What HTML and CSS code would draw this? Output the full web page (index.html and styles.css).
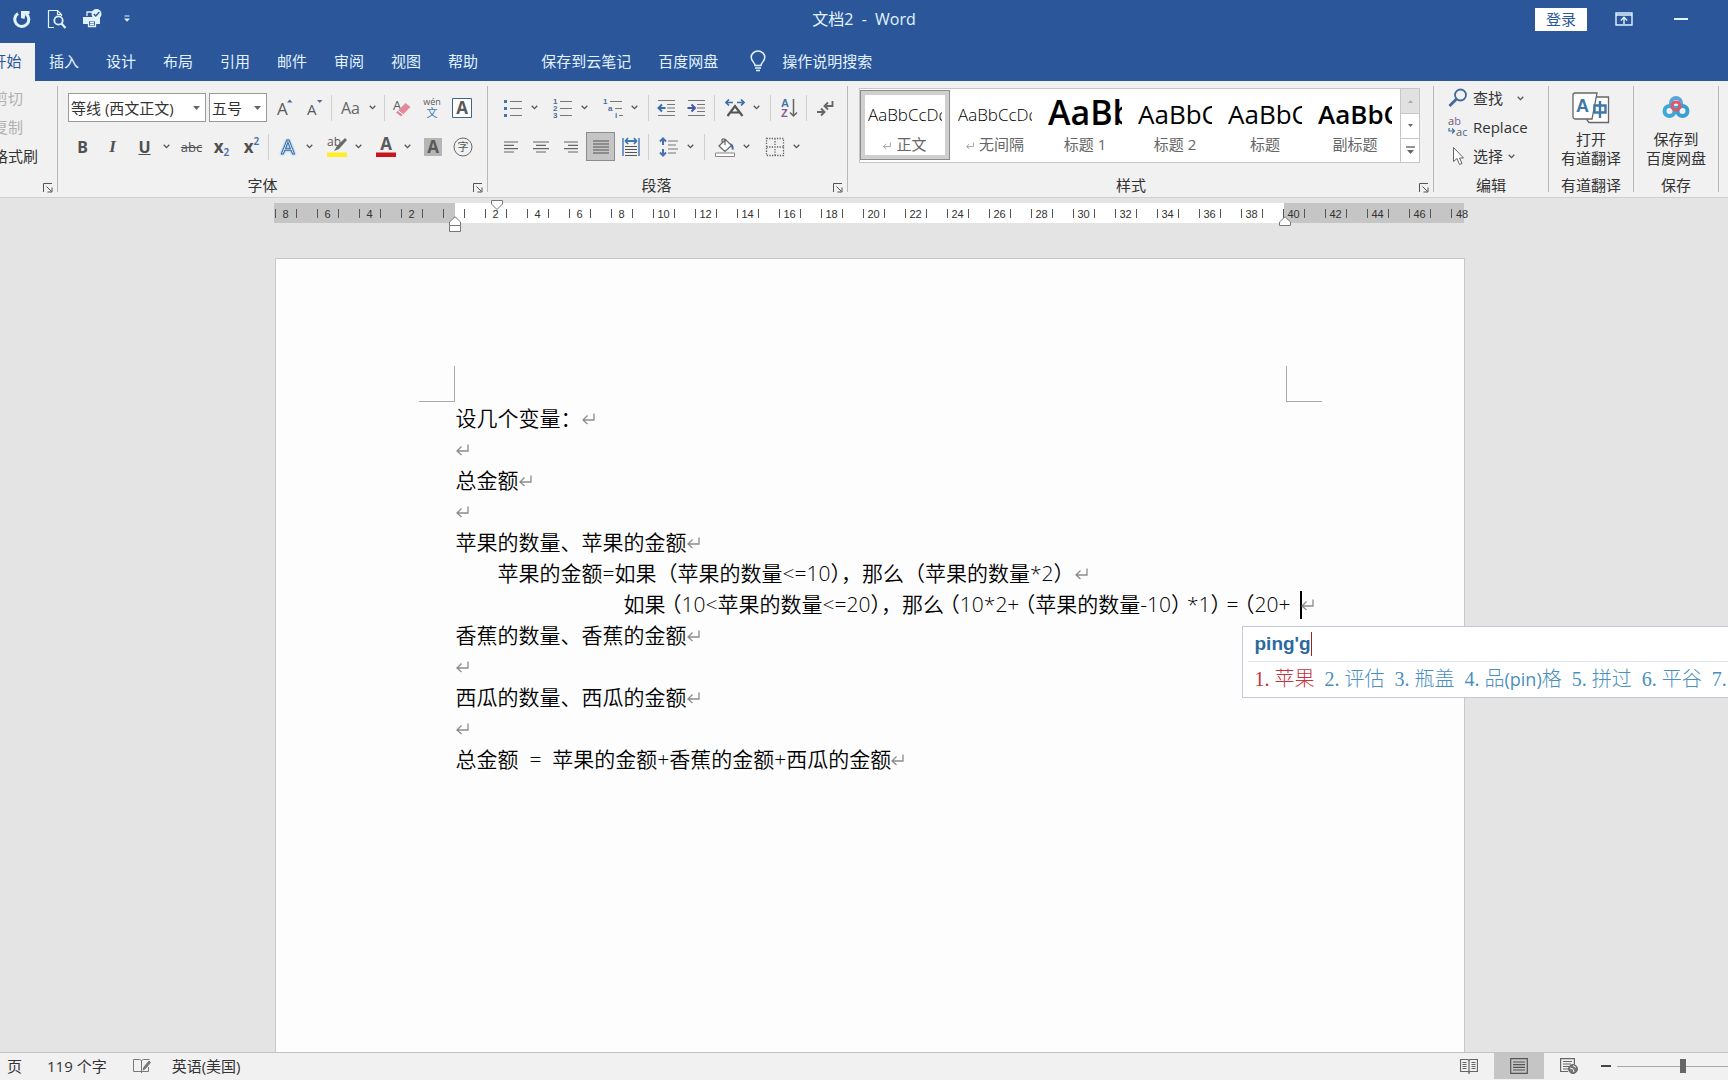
FILE: index.html
```html
<!DOCTYPE html>
<html lang="zh-CN">
<head>
<meta charset="utf-8">
<title>文档2 - Word</title>
<link rel="stylesheet" href="styles.css">
</head>
<body>
<svg class="defs" aria-hidden="true">
  <symbol id="chev" viewBox="0 0 7 5"><path d="M.7.8 3.5 3.6 6.3.8" fill="none" stroke="#555" stroke-width="1.3"/></symbol>
  <symbol id="tri" viewBox="0 0 7 4"><path d="M0 0h7L3.500 4z" fill="#666"/></symbol>
  <symbol id="launch" viewBox="0 0 10 10"><path d="M.5 9V.5H9M3.500 3.500l5 5M9 4.500V9H4.500" fill="none" stroke="#555"/></symbol>
  <symbol id="ret" viewBox="0 0 13 12"><path d="M12 .5V7H1.500M5.500 2.500 1 7l4.500 4" fill="none" stroke="#8c8c8c" stroke-width="1.300"/></symbol>
</svg>

<header class="titlebar">
  <div class="quick">
    <button class="qbtn" aria-label="重复"><svg width="18" height="18" viewBox="0 0 18 18"><path d="M5 3.500A7 7 0 1 0 13 3.800" fill="none" stroke="#e2f2ff" stroke-width="3"/><path d="M8 1h8.500v3h-4l-1 5L8 8z" fill="#e2f2ff"/></svg></button>
    <button class="qbtn" aria-label="打印预览"><svg width="20" height="20" viewBox="0 0 20 20" fill="none" stroke="#e2f2ff"><path d="M7 18.500H1.500v-17h9l4 4V7M10.500 1.500v4h4" stroke-width="1.200"/><circle cx="11.500" cy="11.500" r="4.200" stroke-width="1.800"/><path d="m14.500 14.500 4 4.500" stroke-width="2.200"/></svg></button>
    <button class="qbtn" aria-label="快速打印"><svg width="20" height="20" viewBox="0 0 20 20"><path d="M1 8h17v7h-4v-3H6v3H1z" fill="#e2f2ff"/><path d="M5 7V3h6M6.500 11.500h7v6h-7zM8 13.500h4M8 15.500h4" fill="none" stroke="#e2f2ff" stroke-width="1.300"/><circle cx="14.500" cy="5" r="5" fill="#e2f2ff"/><path d="m11.800 5 2 2 3.500-4" fill="none" stroke="#2b579a" stroke-width="1.400"/></svg></button>
    <button class="qbtn" aria-label="自定义快速访问工具栏"><svg width="8" height="8" viewBox="0 0 8 8"><path d="M1.500 1h5" stroke="#e2f2ff"/><path d="M1 3.500h6L4 6.800z" fill="#e2f2ff"/></svg></button>
  </div>
  <h1 class="doc-title">文档2&nbsp; -&nbsp; Word</h1>
  <div class="window">
    <button class="signin">登录</button>
    <button class="wbtn" aria-label="功能区显示选项"><svg width="18" height="14" viewBox="0 0 18 14" fill="none" stroke="#e2f2ff" stroke-width="1.400"><path d="M1 1h16v12H1zM1 3h16M9 12V5.500M5.800 8.500 9 5.300l3.200 3.200"/></svg></button>
    <button class="wbtn" aria-label="最小化"><svg width="14" height="2"><path d="M0 1h14" stroke="#e2f2ff" stroke-width="2"/></svg></button>
  </div>
</header>

<nav class="tabs">
  <button class="tab active">开始</button>
  <button class="tab">插入</button>
  <button class="tab">设计</button>
  <button class="tab">布局</button>
  <button class="tab">引用</button>
  <button class="tab">邮件</button>
  <button class="tab">审阅</button>
  <button class="tab">视图</button>
  <button class="tab">帮助</button>
  <button class="tab addin">保存到云笔记</button>
  <button class="tab">百度网盘</button>
  <button class="tab tell"><svg width="16" height="22" viewBox="0 0 16 22" fill="none" stroke="#e2f2ff" stroke-width="1.500"><path d="M5 15.500C5 12.500 1.200 11.500 1.200 7.300a6.800 6.300 0 0 1 13.600 0c0 4.200-3.800 5.200-3.800 8.200zM5 18h6M6 20.500h4"/></svg>操作说明搜索</button>
</nav>

<div class="ribbon">
  <section class="group clip">
    <div class="stack">
      <button class="line off">剪切</button>
      <button class="line off">复制</button>
      <button class="line">格式刷</button>
    </div>
    <footer class="cap"><span></span><button class="launch" aria-label="剪贴板设置"><svg width="10" height="10"><use href="#launch"/></svg></button></footer>
  </section>

  <section class="group font">
    <div class="row">
      <button class="combo face"><span>等线 (西文正文)</span><svg width="7" height="4"><use href="#tri"/></svg></button>
      <button class="combo size"><span>五号</span><svg width="7" height="4"><use href="#tri"/></svg></button>
      <button class="btn" aria-label="增大字号"><svg width="16" height="18" viewBox="0 0 16 18"><text class="g" x="0" y="16" font-size="17">A</text><path d="M10 3.500h5.500L12.700.5z" fill="#4a6f9c"/></svg></button>
      <button class="btn" aria-label="减小字号"><svg width="16" height="18" viewBox="0 0 16 18"><text class="g" x="0" y="16" font-size="15">A</text><path d="M10 1h5.500l-2.800 3z" fill="#4a6f9c"/></svg></button>
      <i class="sep"></i>
      <button class="btn split" aria-label="更改大小写"><span class="ico lat">Aa</span><svg width="7" height="5"><use href="#chev"/></svg></button>
      <i class="sep"></i>
      <button class="btn" aria-label="清除格式"><svg width="20" height="20" viewBox="0 0 20 20"><text class="g" x="1" y="12" font-size="13">A</text><path d="m4 14.500 9.500-9.500 5 4-9.500 9.500z" fill="#e28a98"/><path d="m6 12.500 5 4" stroke="#fff"/></svg></button>
      <button class="btn" aria-label="拼音指南"><svg width="18" height="20" viewBox="0 0 18 20"><text class="g" x="9" y="7" font-size="9" text-anchor="middle">wén</text><text class="c" x="9" y="19" font-size="11" fill="#3c77b0" text-anchor="middle">文</text></svg></button>
      <button class="btn" aria-label="字符边框"><svg width="20" height="20" viewBox="0 0 20 20"><path d="M.5.5h19v19H.5z" fill="#fff" stroke="#41648c"/><text class="g b" x="10" y="16" font-size="17" text-anchor="middle">A</text></svg></button>
    </div>
    <div class="row">
      <button class="btn bold">B</button>
      <button class="btn italic">I</button>
      <button class="btn split under"><span class="ico">U</span><svg width="7" height="5"><use href="#chev"/></svg></button>
      <button class="btn strike">abc</button>
      <button class="btn x">x<sub>2</sub></button>
      <button class="btn x">x<sup>2</sup></button>
      <i class="sep"></i>
      <button class="btn split" aria-label="文本效果"><svg class="ico" width="20" height="20" viewBox="0 0 20 20"><text class="lsans glow" x="10" y="17" font-size="20" text-anchor="middle">A</text></svg><svg width="7" height="5"><use href="#chev"/></svg></button>
      <button class="btn split" aria-label="突出显示"><svg class="ico" width="20" height="20" viewBox="0 0 20 20"><text class="g" x="0" y="9" font-size="12">ab</text><path d="m18 1 2 2-8 9-5 2 3-5z" fill="#6b6b66"/><path d="M0 15.500h20v4.500H0z" fill="#ffee22"/></svg><svg width="7" height="5"><use href="#chev"/></svg></button>
      <button class="btn split" aria-label="字体颜色"><svg class="ico" width="20" height="20" viewBox="0 0 20 20"><text class="g b" x="10" y="13" font-size="17" text-anchor="middle">A</text><path d="M0 15.500h20v4.500H0z" fill="#c9151b"/></svg><svg width="7" height="5"><use href="#chev"/></svg></button>
      <button class="btn" aria-label="字符底纹"><svg width="18" height="18" viewBox="0 0 18 18"><path d="M0 0h18v18H0z" fill="#b5b5b5"/><text class="g b" x="9" y="15" font-size="17" text-anchor="middle">A</text></svg></button>
      <button class="btn" aria-label="带圈字符"><svg width="20" height="20" viewBox="0 0 20 20"><circle cx="10" cy="10" r="9" fill="none" stroke="#666"/><text class="c" x="10" y="14" font-size="11" text-anchor="middle" fill="#555">字</text></svg></button>
    </div>
    <footer class="cap"><span>字体</span><button class="launch" aria-label="字体设置"><svg width="10" height="10"><use href="#launch"/></svg></button></footer>
  </section>

  <section class="group para">
    <div class="row">
      <button class="btn split" aria-label="项目符号"><svg class="ico" width="20" height="18" viewBox="0 0 20 18"><path d="M7 2.500h12M7 9.500h12M7 16.500h12" stroke="#777" stroke-width="1.200"/><path d="M1 1h3v3H1zM1 8h3v3H1zM1 15h3v3H1z" fill="#3f77b5"/></svg><svg width="7" height="5"><use href="#chev"/></svg></button>
      <button class="btn split" aria-label="编号"><svg class="ico" width="20" height="20" viewBox="0 0 20 20"><path d="M7 3.500h12M7 10.500h12M7 17.500h12" stroke="#777" stroke-width="1.200"/><g class="n"><text x="0" y="6">1</text><text x="0" y="13">2</text><text x="0" y="20">3</text></g></svg><svg width="7" height="5"><use href="#chev"/></svg></button>
      <button class="btn split" aria-label="多级列表"><svg class="ico" width="20" height="20" viewBox="0 0 20 20"><path d="M7 3.500h12M12 10.500h7M16 17.500h4" stroke="#777" stroke-width="1.200"/><g class="n"><text x="0" y="6">1</text><text x="5" y="13">a</text><text x="12" y="20">i</text></g></svg><svg width="7" height="5"><use href="#chev"/></svg></button>
      <i class="sep"></i>
      <button class="btn" aria-label="减少缩进"><svg width="19" height="18" viewBox="0 0 19 18"><path d="M1 1.500h17M10 5.500h8M10 9h8M10 12.500h8M1 16.500h17" stroke="#777" stroke-width="1.200"/><path d="M8.500 9H2M5 5.500 1.500 9 5 12.500" fill="none" stroke="#3a6ea5" stroke-width="2"/></svg></button>
      <button class="btn" aria-label="增加缩进"><svg width="19" height="18" viewBox="0 0 19 18"><path d="M1 1.500h17M10 5.500h8M10 9h8M10 12.500h8M1 16.500h17" stroke="#777" stroke-width="1.200"/><path d="M.5 9H7M4.500 5.500 8 9l-3.500 3.500" fill="none" stroke="#4557a8" stroke-width="2"/></svg></button>
      <i class="sep"></i>
      <button class="btn split" aria-label="中文版式"><svg class="ico" width="20" height="18" viewBox="0 0 20 18"><path d="M1 3.500h7M12 3.500h7M4 .5l-3 3 3 3M16 .5l3 3-3 3" fill="none" stroke="#3a6ea5" stroke-width="1.700"/><path d="m2.500 17 7.500-10 7.500 10M6 13.500h8" fill="none" stroke="#555" stroke-width="2.200"/></svg><svg width="7" height="5"><use href="#chev"/></svg></button>
      <i class="sep"></i>
      <button class="btn" aria-label="排序"><svg width="18" height="20" viewBox="0 0 18 20"><text class="lsans b" x="1" y="9" font-size="11" fill="#3f77a8">A</text><text class="lsans b" x="1" y="19" font-size="11" fill="#8a5a9a">Z</text><path d="M13.500 1v17M10 14.500l3.500 3.500 3.500-3.500" fill="none" stroke="#666" stroke-width="1.500"/></svg></button>
      <i class="sep"></i>
      <button class="btn" aria-label="显示编辑标记"><svg width="18" height="18" viewBox="0 0 18 18" fill="none" stroke="#666" stroke-width="1.900"><path d="M16.500 2v5H9M12 3.500 8.500 7l3.500 3.500M1 13h7M5 9.500 8.500 13 5 16.500"/></svg></button>
    </div>
    <div class="row">
      <button class="btn" aria-label="左对齐"><svg width="16" height="12" viewBox="0 0 16 12"><path d="M1 1h14M1 4.300h10M1 7.600h14M1 11h10" stroke="#666" stroke-width="1.200"/></svg></button>
      <button class="btn" aria-label="居中"><svg width="16" height="12" viewBox="0 0 16 12"><path d="M0 1h16M3 4.300h10M0 7.600h16M3 11h10" stroke="#666" stroke-width="1.200"/></svg></button>
      <button class="btn" aria-label="右对齐"><svg width="16" height="12" viewBox="0 0 16 12"><path d="M1 1h14M5 4.300h10M1 7.600h14M5 11h10" stroke="#666" stroke-width="1.200"/></svg></button>
      <button class="btn on" aria-label="两端对齐"><svg width="16" height="14" viewBox="0 0 16 14"><path d="M0 1h16M0 4h16M0 7h16M0 10h16M0 13h16" stroke="#555" stroke-width="1.200"/></svg></button>
      <button class="btn" aria-label="分散对齐"><svg width="18" height="20" viewBox="0 0 18 20"><path d="M1 1v18M17 1v18" stroke="#3f77b5" stroke-width="1.400"/><path d="M4 4h10M6 1 3.500 4 6 7M12 1l2.500 3L12 7" fill="none" stroke="#3f77b5" stroke-width="1.800"/><path d="M3 9.500h12M3 12.500h12M3 15.500h12M3 18.500h12" stroke="#555" stroke-width="1.200"/></svg></button>
      <i class="sep"></i>
      <button class="btn split" aria-label="行距"><svg class="ico" width="20" height="20" viewBox="0 0 20 20"><path d="M4 2v6M4 12v6M1 4.500l3-3 3 3M1 15.500l3 3 3-3" fill="none" stroke="#4a6fb5" stroke-width="2"/><path d="M9 4h10M9 8h8M9 12h10M9 16h8" stroke="#777" stroke-width="1.200"/></svg><svg width="7" height="5"><use href="#chev"/></svg></button>
      <i class="sep"></i>
      <button class="btn split" aria-label="底纹"><svg class="ico" width="20" height="20" viewBox="0 0 20 20"><path d="m4 9 6.500-6.500 6 6L10 14.500zM10 8V2.500a2 2 0 0 0-3 0V6" fill="#fff" stroke="#666" stroke-width="1.200"/><path d="M15 6c3 1 4 3 3.500 7-2 0-2.500-3-2-5z" fill="#3a6ea5"/><path d="M.5 16h19v3.500H.5z" fill="#fff" stroke="#888"/></svg><svg width="7" height="5"><use href="#chev"/></svg></button>
      <button class="btn split" aria-label="边框"><svg class="ico" width="20" height="20" viewBox="0 0 20 20"><path d="M1.500 1.500h17v17h-17zM10 1.500v17M1.500 10h17" fill="none" stroke="#666" stroke-width="1.300" stroke-dasharray="1.300 1.300"/></svg><svg width="7" height="5"><use href="#chev"/></svg></button>
    </div>
    <footer class="cap"><span>段落</span><button class="launch" aria-label="段落设置"><svg width="10" height="10"><use href="#launch"/></svg></button></footer>
  </section>

  <section class="group styles">
    <div class="gallery">
      <button class="style on"><span class="pv">AaBbCcDd</span><span class="nm"><svg width="8" height="8" viewBox="0 0 13 12"><use href="#ret"/></svg>正文</span></button>
      <button class="style"><span class="pv">AaBbCcDd</span><span class="nm"><svg width="8" height="8" viewBox="0 0 13 12"><use href="#ret"/></svg>无间隔</span></button>
      <button class="style"><span class="pv h1">AaBb</span><span class="nm">标题 1</span></button>
      <button class="style"><span class="pv h2">AaBbC</span><span class="nm">标题 2</span></button>
      <button class="style"><span class="pv h2">AaBbC</span><span class="nm">标题</span></button>
      <button class="style"><span class="pv h2 b">AaBbC</span><span class="nm">副标题</span></button>
      <div class="scroll">
        <button class="off" aria-label="上一行"><svg width="5" height="3" viewBox="0 0 7 4"><path d="M0 4h7L3.500 0z" fill="#aaa"/></svg></button>
        <button aria-label="下一行"><svg width="5" height="3" viewBox="0 0 7 4"><use href="#tri"/></svg></button>
        <button aria-label="其他样式"><svg width="9" height="8" viewBox="0 0 9 8"><path d="M0 1h9" stroke="#666" stroke-width="1.400"/><path d="M1 4h7L4.500 8z" fill="#666"/></svg></button>
      </div>
    </div>
    <footer class="cap"><span>样式</span><button class="launch" aria-label="样式设置"><svg width="10" height="10"><use href="#launch"/></svg></button></footer>
  </section>

  <section class="group edit">
    <div class="stack">
      <button class="line"><svg width="20" height="20" viewBox="0 0 20 20" fill="none" stroke="#41699c"><circle cx="12.500" cy="7" r="5.500" stroke-width="1.800"/><path d="m8.500 11-7 7" stroke-width="2.800"/></svg><span>查找</span><svg class="far" width="7" height="5"><use href="#chev"/></svg></button>
      <button class="line"><svg width="20" height="20" viewBox="0 0 20 20"><text class="g" x="0" y="8" font-size="11">a<tspan fill="#8a5a9a">b</tspan></text><text class="g" x="8" y="19" font-size="11">a<tspan fill="#3a6ea5">c</tspan></text><path d="M1 11v3h5M4 11.500 6.500 14 4 16.500" fill="none" stroke="#3a6ea5" stroke-width="1.200"/></svg><span class="en">Replace</span></button>
      <button class="line"><svg width="20" height="20" viewBox="0 0 20 20"><path d="M5.500 1.500v14l3.500-3 2.500 6 2.500-1-2.500-5.500h4z" fill="#fff" stroke="#666"/></svg><span>选择</span><svg width="7" height="5"><use href="#chev"/></svg></button>
    </div>
    <footer class="cap"><span>编辑</span></footer>
  </section>

  <section class="group addon">
    <button class="big"><svg width="38" height="32" viewBox="0 0 38 32"><path d="M15 28v-1l6-22h15.500v25.500H17z" fill="#fff" stroke="#666" stroke-width="1.300"/><path d="M3 1h22l-5 26H3a2 2 0 0 1-2-2V3a2 2 0 0 1 2-2z" fill="#fff" stroke="#666" stroke-width="1.300"/><text class="lsans b" x="4" y="20" font-size="18" fill="#3f77a8">A</text><path d="M22.500 13.500h11v7h-11zM28 9v17" fill="none" stroke="#3f77a8" stroke-width="2.400"/></svg><span>打开<br>有道翻译</span></button>
    <footer class="cap"><span>有道翻译</span></footer>
  </section>
  <section class="group addon">
    <button class="big"><svg width="28" height="32" viewBox="0 0 28 32" fill="none" stroke-width="4"><circle cx="14" cy="11" r="5" stroke="#5aa5dc"/><circle cx="7.500" cy="19" r="5" stroke="#3fa9d6"/><circle cx="20.500" cy="19" r="5" stroke="#3a9fd0"/><circle cx="14" cy="14" r="4" stroke="#e2566b" stroke-width="3"/></svg><span>保存到<br>百度网盘</span></button>
    <footer class="cap"><span>保存</span></footer>
  </section>
</div>

<main class="work">
  <div class="sheet">
    <div class="ruler">
      <span><b>8</b></span><span><b>6</b></span><span><b>4</b></span><span><b>2</b></span><span><b></b></span><span><b>2</b></span><span><b>4</b></span><span><b>6</b></span><span><b>8</b></span><span><b>10</b></span><span><b>12</b></span><span><b>14</b></span><span><b>16</b></span><span><b>18</b></span><span><b>20</b></span><span><b>22</b></span><span><b>24</b></span><span><b>26</b></span><span><b>28</b></span><span><b>30</b></span><span><b>32</b></span><span><b>34</b></span><span><b>36</b></span><span><b>38</b></span><span><b>40</b></span><span><b>42</b></span><span><b>44</b></span><span><b>46</b></span><span class="end"><b>48</b></span>
      <svg class="mark first" width="12" height="10" viewBox="0 0 12 10"><path d="M.5.500h11V4L6 9.500.5 4z" fill="#fff" stroke="#777"/></svg>
      <svg class="mark left" width="12" height="16" viewBox="0 0 12 16"><path d="M.5 9.500V6L6 .700 11.500 6v3.500zM.5 9.500h11v6H.5z" fill="#fff" stroke="#777"/></svg>
      <svg class="mark right" width="12" height="10" viewBox="0 0 12 10"><path d="M.5 9.500V6L6 .700 11.500 6v3.500z" fill="#fff" stroke="#777"/></svg>
    </div>
    <article class="page">
      <div class="corners"><i></i><i></i></div>
      <div class="text">
        <p>设几个变量：<svg class="ret" width="13" height="12"><use href="#ret"/></svg></p>
        <p><svg class="ret" width="13" height="12"><use href="#ret"/></svg></p>
        <p>总金额<svg class="ret" width="13" height="12"><use href="#ret"/></svg></p>
        <p><svg class="ret" width="13" height="12"><use href="#ret"/></svg></p>
        <p>苹果的数量、苹果的金额<svg class="ret" width="13" height="12"><use href="#ret"/></svg></p>
        <p class="in1">苹果的金额=如果（苹果的数量&lt;=10），那么（苹果的数量*2）<svg class="ret" width="13" height="12"><use href="#ret"/></svg></p>
        <p class="in2">如果 <span class="half">（</span>10&lt;苹果的数量&lt;=20），那么 <span class="half">（</span>10*2+ <span class="half">（</span>苹果的数量-10<span class="half">）</span> *1<span class="half">）</span> = <span class="half">（</span>20+ <i class="caret"></i><svg class="ret" width="13" height="12"><use href="#ret"/></svg></p>
        <p>香蕉的数量、香蕉的金额<svg class="ret" width="13" height="12"><use href="#ret"/></svg></p>
        <p><svg class="ret" width="13" height="12"><use href="#ret"/></svg></p>
        <p>西瓜的数量、西瓜的金额<svg class="ret" width="13" height="12"><use href="#ret"/></svg></p>
        <p><svg class="ret" width="13" height="12"><use href="#ret"/></svg></p>
        <p>总金额&nbsp; =&nbsp; 苹果的金额+香蕉的金额+西瓜的金额<svg class="ret" width="13" height="12"><use href="#ret"/></svg></p>
      </div>
      <div class="ime">
        <div class="typed">ping'g<i></i></div>
        <ol class="cands">
          <li class="sel"><b>1.</b>苹果</li>
          <li><b>2.</b>评估</li>
          <li><b>3.</b>瓶盖</li>
          <li><b>4.</b>品<small>(pin)</small>格</li>
          <li><b>5.</b>拼过</li>
          <li><b>6.</b>平谷</li>
          <li><b>7.</b></li>
        </ol>
      </div>
    </article>
  </div>
</main>

<footer class="status">
  <div class="info">
    <span>页</span>
    <span>119 个字</span>
    <svg width="20" height="16" viewBox="0 0 20 16" fill="none" stroke="#777"><path d="M9.500 13.500H1.500V1.500h6l2 1 2-1h6M9.500 2.500V15M9.500 13.500h7V9"/><path d="m11 12 1-3 5-6 1.500 1.500-5 6z" fill="#777"/></svg>
    <span>英语(美国)</span>
  </div>
  <div class="views">
    <button class="view" aria-label="阅读视图"><svg width="18" height="16" viewBox="0 0 18 16" fill="none" stroke="#666"><path d="M9 2.500V16M9 2.500l-1-1H.5v12H8l1 1 1-1h7.500v-12H10z" stroke-width="1.200"/><path d="M2.500 4.500h4M2.500 6.500h4M2.500 8.500h4M2.500 10.500h4M11.500 4.500h4M11.500 6.500h4M11.500 8.500h4M11.500 10.500h4"/></svg></button>
    <button class="view on" aria-label="页面视图"><svg width="18" height="16" viewBox="0 0 18 16" fill="none" stroke="#555"><path d="M.7.700h16.600v14.600H.7zM3 4h12M3 6.700h12M3 9.400h12M3 12h12" stroke-width="1.200"/></svg></button>
    <button class="view" aria-label="Web 版式"><svg width="18" height="16" viewBox="0 0 18 16" fill="none" stroke="#666"><path d="M8 13.500H.6V.600h13.800V6M3 3.500h9M3 6h8M3 8.500h6M3 11h5" stroke-width="1.200"/><circle cx="13" cy="11" r="4.500" fill="#777"/><path d="M10 10l3 1 1 3M13 7.500l3 2" stroke="#eee"/></svg></button>
    <button class="minus" aria-label="缩小"><svg width="10" height="2"><path d="M0 1h10" stroke="#444" stroke-width="2"/></svg></button>
    <input class="zoom" type="range" min="0" max="100" value="60" aria-label="显示比例">
  </div>
</footer>
</body>
</html>
```
FILE: styles.css
```css
* { box-sizing: border-box; }
html, body { margin: 0; height: 100%; }
body {
  display: flex;
  flex-direction: column;
  overflow: hidden;
  background: #e4e4e4;
  color: #333;
  font: 15px/20px "Open Sans", "Noto Sans CJK SC", sans-serif;
}
button {
  margin: 0;
  padding: 0;
  border: 0;
  background: none;
  color: inherit;
  font: inherit;
  white-space: nowrap;
}
svg { display: block; flex: none; }
.defs { position: absolute; width: 0; height: 0; }
svg text { font-family: "Open Sans", sans-serif; }
svg .g { fill: #5a5a5a; }
svg .b { font-weight: 700; }
svg .c { font-family: "Noto Sans CJK SC", sans-serif; }
svg .lsans { font-family: "Liberation Sans", sans-serif; }
svg .n text { font: 700 8px "Liberation Sans", sans-serif; fill: #4a6f9c; }
svg .glow { fill: #fff; stroke: #3a6ea5; filter: drop-shadow(0 0 1px #6fb0ec); }

/* title bar */
.titlebar {
  display: grid;
  grid-template-columns: 1fr auto 1fr;
  align-items: center;
  flex: none;
  height: 43px;
  padding-bottom: 5px;
  background: #2b579a;
  color: #e2f2ff;
}
.quick { display: flex; align-items: center; padding-left: 4px; }
.qbtn { display: flex; justify-content: center; width: 35px; }
.doc-title { margin: 0; font-size: 16px; font-weight: 400; }
.window { display: flex; justify-content: flex-end; align-items: center; padding-right: 28px; }
.signin { width: 52px; height: 23px; margin-right: 8px; background: #fff; color: #2b579a; }
.wbtn { display: flex; justify-content: center; width: 57px; }
.wbtn:last-child { width: 38px; margin-left: 10px; }

/* tabs */
.tabs { display: flex; flex: none; height: 38px; padding-left: 35px; background: #2b579a; color: #e2f2ff; }
.tab { flex: none; padding: 0 13px 2px; margin-right: 1px; }
.tab.active { width: 48px; margin-left: -48px; padding-left: 4px; background: #f1f1f1; color: #2b579a; }
.addin { margin-left: 36px; }
.tell { display: flex; align-items: center; gap: 16px; margin-left: 5px; }

/* ribbon */
.ribbon { display: flex; flex: none; height: 117px; padding: 5px 0; background: #f1f1f1; border-bottom: 1px solid #cfcfcf; }
.group { display: flex; flex-direction: column; flex: none; height: 106px; border-right: 1px solid #b9b9b9; }
.cap { display: flex; align-items: center; height: 22px; margin-top: auto; margin-bottom: -4px; }
.cap span { flex: 1; text-align: center; line-height: 20px; }
.launch { margin: 6px 4px 0; }
.clip { width: 58px; }
.clip .line { margin-left: -7px; }
.font { width: 430px; padding: 2px 0 0 10px; }
.para { width: 360px; padding: 2px 0 0 8px; }
.styles { width: 586px; padding: 2px 0 0 11px; }
.font .cap, .para .cap, .styles .cap { margin-left: -12px; }
.edit { width: 115px; }
.addon { width: 85px; }
.stack { display: flex; flex-direction: column; gap: 5px; }
.line { display: flex; align-items: center; gap: 5px; height: 24px; }
.edit .line { padding-left: 14px; }
.off { color: #b0b0b0; }
.en { font-size: 15px; }
.far { margin-left: 9px; }

.row { display: flex; align-items: center; gap: 1px; height: 39px; }
.btn { display: flex; align-items: center; justify-content: center; flex: none; width: 29px; height: 29px; color: #505050; }
.split { width: 49px; gap: 8px; }
.font .split { width: 48px; }
.ico { width: 20px; text-align: center; }
.lat { font-size: 16px; color: #666; }
.on.btn { background: #c5c5c5; border: 1px solid #8c8c8c; }
.sep { width: 3px; height: 26px; padding: 0 1px; background: #d0d0d0 content-box; }
.para .sep { width: 5px; padding: 0 2px; }
.combo {
  display: flex;
  align-items: center;
  justify-content: space-between;
  height: 29px;
  margin-right: 2px;
  padding: 0 5px 0 2px;
  border: 1px solid #999;
  background: #fff;
}
.face { width: 138px; }
.size { width: 58px; }
.bold { font: 700 16px "Noto Sans", sans-serif; }
.italic { font: italic 700 17px "Liberation Serif", serif; }
.under .ico { font: 700 16px "Noto Sans", sans-serif; text-decoration: underline; }
.strike { font-size: 13px; text-decoration: line-through; }
.x { font: 700 17px "Noto Sans", sans-serif; }
.x sub, .x sup { font-size: 10px; font-weight: 600; line-height: 10px; color: #3f6fa8; }
.x sub { align-self: center; margin-top: 10px; }
.x sup { align-self: center; margin-bottom: 12px; }

.gallery { display: flex; width: 561px; height: 75px; border: 1px solid #c6c6c6; background: #fff; }
.style { display: flex; flex-direction: column; width: 90px; height: 70px; margin-top: 1px; padding: 5px 8px 0; }
.style.on { border: 1px solid #8c8c8c; padding: 4px 7px 0; box-shadow: inset 0 0 0 4px #cfcfcf; }
.pv { display: block; width: 74px; height: 39px; overflow: hidden; color: #000; font: 300 17px/40px "Open Sans", sans-serif; text-align: left; }
.h1 { font-size: 34px; font-weight: 600; line-height: 34px; }
.h2 { font-size: 26px; font-weight: 400; line-height: 38px; }
.h2.b { font-weight: 600; }
.nm { display: flex; justify-content: center; align-items: center; gap: 5px; color: #666; white-space: pre; }
.nm svg { margin-top: 4px; }
.scroll { display: grid; grid-template-rows: repeat(3, 1fr); flex: 1; border-left: 1px solid #c6c6c6; }
.scroll button { display: grid; place-items: center; border-top: 1px solid #c6c6c6; }
.scroll button:first-child { border-top: 0; background: #e1e1e1; }
.big { display: flex; flex-direction: column; align-items: center; gap: 6px; padding-top: 6px; line-height: 19px; }

/* workspace */
.work { display: flex; justify-content: center; flex: 1; min-height: 0; overflow: hidden; padding: 5px 0 0 11px; }
.sheet { display: flex; flex-direction: column; flex: none; width: 1190px; }
.ruler {
  position: relative;
  display: flex;
  flex: none;
  align-items: center;
  width: 1218px;
  height: 20px;
  margin-left: -10px;
  background: linear-gradient(90deg, transparent 9px, #c5c5c5 9px 190px, #fff 190px 1019px, #c5c5c5 1019px 1199px, transparent 1199px);
}
.ruler span { display: flex; justify-content: center; width: 42px; }
.ruler b { width: 22px; height: 9px; border: solid #555; border-width: 0 1px; font: 11px/10px "Liberation Sans", sans-serif; text-align: center; }
.ruler .end b { border-right: 0; }
.mark { position: absolute; }
.first { left: 226px; top: -3px; }
.left { left: 184px; top: 13px; }
.right { left: 1014px; top: 13px; }

.page { position: relative; flex: 1; margin-top: 35px; border: 1px solid #c8c8c8; border-bottom: 0; background: #fdfdfd; }
.corners { display: flex; justify-content: space-between; height: 36px; margin: 107px 142px 0 143px; }
.corners i { width: 36px; border: solid #a8a8a8; border-width: 0 1px 1px 0; }
.corners i + i { border-width: 0 0 1px 1px; }
.text { padding: 1px 0 0 180px; color: #000; font: 350 21px/31px "Open Sans", "Noto Sans CJK SC", sans-serif; }
.text p { display: flex; align-items: center; height: 31px; margin: 0; white-space: pre; }
.text .in1 { padding-left: 42px; }
.text .in2 { padding-left: 168px; }
.half { font-feature-settings: "halt"; }
.caret { width: 2px; height: 28px; margin: 0 -1px 0 4px; background: #000; }

/* input method window */
.ime { position: absolute; left: 966px; top: 367px; width: 640px; height: 72px; padding: 0 5px; border: 1px solid #c3cad6; background: #fff; }
.typed { display: flex; align-items: center; height: 35px; padding-left: 7px; border-bottom: 1px solid #dbe4f0; color: #2a6a9f; font: 700 19px "Liberation Sans", sans-serif; }
.typed i { width: 1px; height: 24px; background: #a02020; }
.cands { display: flex; gap: 10px; height: 35px; margin: 0; padding: 0 0 0 7px; list-style: none; color: #4a8fc0; font: 300 20px/34px "Liberation Serif", "Noto Sans CJK SC", serif; white-space: nowrap; }
.cands li { display: flex; }
.cands b { width: 20px; font-weight: 400; }
.cands small { font: 18px/34px "Open Sans", sans-serif; }
.sel { color: #c8323c; }

/* status bar */
.status { display: flex; justify-content: space-between; flex: none; height: 28px; padding-bottom: 1px; border-top: 1px solid #c3c3c3; background: #f1f1f1; }
.info { display: flex; align-items: center; gap: 25px; padding-left: 7px; }
.info svg { margin-right: -5px; }
.views { display: flex; align-items: center; }
.view { display: grid; place-items: center; width: 50px; height: 26px; }
.view.on { background: #c5c5c5; }
.minus { display: grid; place-items: center; width: 22px; margin-left: 1px; }
.zoom { width: 111px; height: 16px; margin: 0; appearance: none; background: linear-gradient(#a8a8a8, #a8a8a8) center / 100% 1px no-repeat; }
.zoom::-webkit-slider-thumb { appearance: none; width: 6px; height: 14px; background: #666; }
```
